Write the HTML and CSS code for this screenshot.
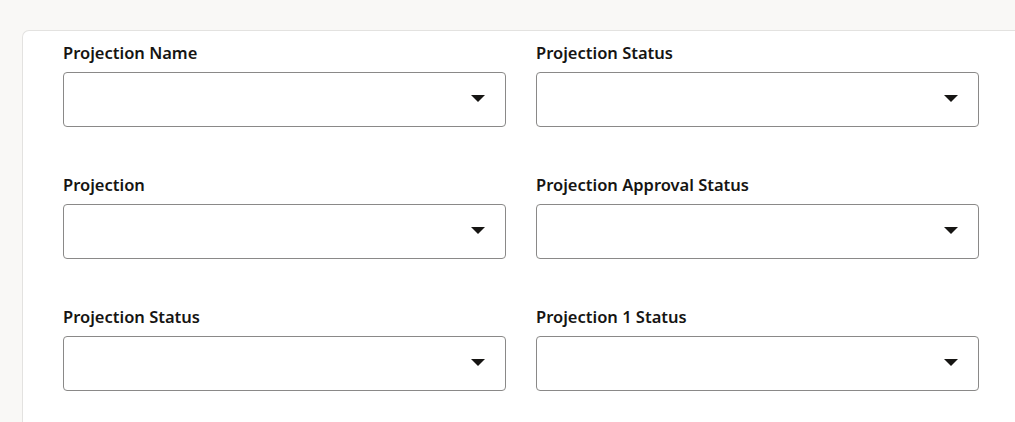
FILE: index.html
```html
<!DOCTYPE html>
<html lang="en">
<head>
<meta charset="utf-8">
<title>Projection</title>
<link rel="stylesheet" href="styles.css">
</head>
<body>
<div class="page">
  <div class="card">
    <div class="form-grid">
      <div class="field">
        <label class="label">Projection Name</label>
        <div class="select"><span class="caret"></span></div>
      </div>
      <div class="field">
        <label class="label">Projection Status</label>
        <div class="select"><span class="caret"></span></div>
      </div>
      <div class="field">
        <label class="label">Projection</label>
        <div class="select"><span class="caret"></span></div>
      </div>
      <div class="field">
        <label class="label">Projection Approval Status</label>
        <div class="select"><span class="caret"></span></div>
      </div>
      <div class="field">
        <label class="label">Projection Status</label>
        <div class="select"><span class="caret"></span></div>
      </div>
      <div class="field">
        <label class="label">Projection 1 Status</label>
        <div class="select"><span class="caret"></span></div>
      </div>
    </div>
  </div>
</div>
</body>
</html>
```
FILE: styles.css
```css
html, body {
  margin: 0;
  padding: 0;
  background: #f9f8f6;
  height: 100%;
  overflow: hidden;
}
.page {
  padding: 30px 0 0 22px;
  font-family: "Noto Sans", "Open Sans", sans-serif;
}
.card {
  background: #ffffff;
  border-top: 1px solid #e3e2e0;
  border-left: 1px solid #e3e2e0;
  border-top-left-radius: 7px;
  padding: 12px 0 0 40px;
  height: 400px;
}
.form-grid {
  display: grid;
  grid-template-columns: 443px 443px;
  column-gap: 30px;
  row-gap: 48px;
}
.field {
  display: flex;
  flex-direction: column;
}
.label {
  font-size: 16.5px;
  font-weight: 600;
  line-height: 20px;
  color: #161513;
  margin-bottom: 9px;
}
.select {
  height: 55px;
  box-sizing: border-box;
  border: 1px solid #8a8988;
  border-radius: 4px;
  display: flex;
  align-items: center;
  justify-content: flex-end;
  padding-right: 20px;
}
.caret {
  width: 0;
  height: 0;
  border-left: 7px solid transparent;
  border-right: 7px solid transparent;
  border-top: 7px solid #161513;
  margin-bottom: 2px;
}
```
